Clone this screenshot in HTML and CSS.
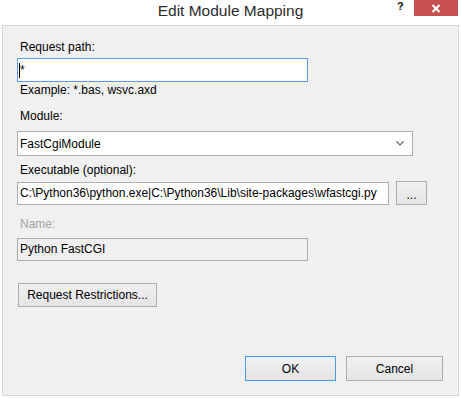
FILE: index.html
```html
<!DOCTYPE html>
<html lang="en">
<head>
    <meta charset="UTF-8">
    <meta name="viewport" content="width=device-width, initial-scale=1.0">
    <title>Edit Module Mapping</title>
    <link rel="stylesheet" href="styles.css">
</head>
<body>

    <div class="titlebar">
        <div class="title">Edit Module Mapping</div>
        <div class="help">?</div>
        <div class="close">
            <svg width="10" height="9" viewBox="0 0 10 9">
                <path d="M1.5 1 L8.5 8 M8.5 1 L1.5 8" stroke="#fff" stroke-width="2" fill="none"/>
            </svg>
        </div>
    </div>

    <div class="panel">
        <div class="label">Request path:</div>
        <div class="textbox focused path"><span class="caret"></span>*</div>
        <div class="hint">Example: *.bas, wsvc.axd</div>

        <div class="label module-label">Module:</div>
        <div class="combo">
            <span>FastCgiModule</span>
            <svg width="8" height="5" viewBox="0 0 8 5">
                <path d="M0.5 0.5 L4 4 L7.5 0.5" stroke="#606060" stroke-width="1.2" fill="none"/>
            </svg>
        </div>

        <div class="label exe-label">Executable (optional):</div>
        <div class="exe-row">
            <div class="textbox exe">C:\Python36\python.exe|C:\Python36\Lib\site-packages\wfastcgi.py</div>
            <div class="button browse">...</div>
        </div>

        <div class="label disabled name-label">Name:</div>
        <div class="textbox readonly name">Python FastCGI</div>

        <div class="button restrictions">Request Restrictions...</div>

        <div class="footer">
            <div class="button default ok">OK</div>
            <div class="button cancel">Cancel</div>
        </div>
    </div>

</body>
</html>
```

FILE: styles.css
```css
body {
    margin: 0;
    width: 461px;
    height: 398px;
    background: #fff;
    font-family: "Liberation Sans", Arial, sans-serif;
    font-size: 12px;
    color: #000;
    overflow: hidden;
}
.titlebar {
    position: relative;
    height: 25px;
}
.title {
    text-align: center;
    font-size: 15.5px;
    line-height: 22px;
    color: #2b2b2b;
}
.help {
    position: absolute;
    left: 397px;
    top: 0;
    font-size: 11px;
    font-weight: bold;
    line-height: 12px;
    color: #111;
}
.close {
    position: absolute;
    left: 414px;
    top: 0;
    width: 44px;
    height: 16px;
    background: #c75050;
    display: flex;
    align-items: center;
    justify-content: center;
}
.panel {
    margin-left: 2px;
    width: 457px;
    height: 371px;
    box-sizing: border-box;
    border: 1px solid #d6d6d6;
    background: #f0f0f0;
    padding: 14px 0 0 14px;
    display: flex;
    flex-direction: column;
    align-items: flex-start;
}
.label {
    line-height: 15px;
    height: 15px;
    padding-left: 3px;
}
.label.disabled {
    color: #a3a3a3;
}
.textbox {
    box-sizing: border-box;
    height: 23px;
    border: 1px solid #abadb3;
    background: #fff;
    line-height: 21px;
    padding-left: 2px;
    white-space: nowrap;
    overflow: hidden;
}
.textbox.focused {
    border-color: #569de5;
}
.path {
    width: 291px;
    height: 24px;
    margin-top: 3px;
    line-height: 22px;
    position: relative;
}
.caret {
    position: absolute;
    left: 1px;
    top: 4px;
    width: 1px;
    height: 15px;
    background: #000;
}
.hint {
    margin-top: 1px;
    line-height: 15px;
    padding-left: 3px;
}
.module-label {
    margin-top: 11px;
}
.combo {
    margin-top: 7px;
    box-sizing: border-box;
    width: 396px;
    height: 25px;
    border: 1px solid #acacac;
    background: #fff;
    display: flex;
    align-items: center;
    justify-content: space-between;
    padding: 0 8px 0 2px;
}
.exe-label {
    margin-top: 7px;
}
.exe-row {
    margin-top: 3px;
    display: flex;
    align-items: flex-start;
    gap: 7px;
}
.exe {
    width: 372px;
    margin-top: 1px;
}
.button {
    box-sizing: border-box;
    height: 24px;
    border: 1px solid #acacac;
    background: linear-gradient(#f0f0f0, #e5e5e5);
    display: flex;
    align-items: center;
    justify-content: center;
}
.browse {
    width: 31px;
    padding-top: 3px;
}
.name-label {
    margin-top: 12px;
}
.readonly {
    background: #f0f0f0;
    border-color: #adadad;
}
.name {
    width: 291px;
    margin-top: 6px;
}
.restrictions {
    margin-top: 22px;
    margin-left: 1px;
    width: 139px;
}
.footer {
    margin-top: 49px;
    margin-left: 228px;
    display: flex;
    gap: 10px;
}
.ok, .cancel {
    height: 25px;
}
.ok {
    width: 91px;
}
.cancel {
    width: 97px;
}
.default {
    border-color: #4a9be6;
}
```
